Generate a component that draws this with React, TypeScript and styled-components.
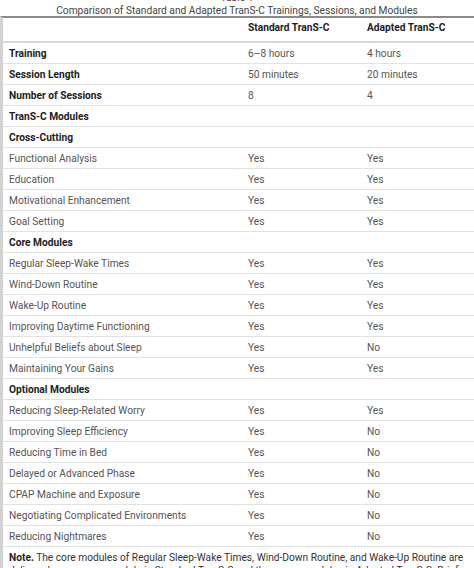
import React from 'react'
import styled, { createGlobalStyle } from 'styled-components'

type Row = { label: string; std?: string; adp?: string; strong?: boolean }

const rows: Row[] = [
  { label: 'Training', std: '6–8 hours', adp: '4 hours', strong: true },
  { label: 'Session Length', std: '50 minutes', adp: '20 minutes', strong: true },
  { label: 'Number of Sessions', std: '8', adp: '4', strong: true },
  { label: 'TranS-C Modules', strong: true },
  { label: 'Cross-Cutting', strong: true },
  { label: 'Functional Analysis', std: 'Yes', adp: 'Yes' },
  { label: 'Education', std: 'Yes', adp: 'Yes' },
  { label: 'Motivational Enhancement', std: 'Yes', adp: 'Yes' },
  { label: 'Goal Setting', std: 'Yes', adp: 'Yes' },
  { label: 'Core Modules', strong: true },
  { label: 'Regular Sleep-Wake Times', std: 'Yes', adp: 'Yes' },
  { label: 'Wind-Down Routine', std: 'Yes', adp: 'Yes' },
  { label: 'Wake-Up Routine', std: 'Yes', adp: 'Yes' },
  { label: 'Improving Daytime Functioning', std: 'Yes', adp: 'Yes' },
  { label: 'Unhelpful Beliefs about Sleep', std: 'Yes', adp: 'No' },
  { label: 'Maintaining Your Gains', std: 'Yes', adp: 'Yes' },
  { label: 'Optional Modules', strong: true },
  { label: 'Reducing Sleep-Related Worry', std: 'Yes', adp: 'Yes' },
  { label: 'Improving Sleep Efficiency', std: 'Yes', adp: 'No' },
  { label: 'Reducing Time in Bed', std: 'Yes', adp: 'No' },
  { label: 'Delayed or Advanced Phase', std: 'Yes', adp: 'No' },
  { label: 'CPAP Machine and Exposure', std: 'Yes', adp: 'No' },
  { label: 'Negotiating Complicated Environments', std: 'Yes', adp: 'No' },
  { label: 'Reducing Nightmares', std: 'Yes', adp: 'No' },
]

export default function App() {
  return (
    <>
      <GlobalStyle />
      <Page>
        <Caption>
          <TableLabel>Table 1</TableLabel>
          <Title>Comparison of Standard and Adapted TranS-C Trainings, Sessions, and Modules</Title>
        </Caption>
        <Body>
          <Table>
            <colgroup>
              <col style={{ width: 239 }} />
              <col style={{ width: 119 }} />
              <col />
            </colgroup>
            <thead>
              <tr>
                <HeadCell />
                <HeadCell>Standard TranS-C</HeadCell>
                <HeadCell>Adapted TranS-C</HeadCell>
              </tr>
            </thead>
            <tbody>
              {rows.map((r) => (
                <tr key={r.label}>
                  <Cell $strong={r.strong}>{r.label}</Cell>
                  <Cell>{r.std}</Cell>
                  <Cell>{r.adp}</Cell>
                </tr>
              ))}
            </tbody>
          </Table>
          <Note>
            <b>Note.</b> The core modules of Regular Sleep-Wake Times, Wind-Down Routine, and Wake-Up Routine are
            delivered as one core module in Standard TranS-C and three core modules in Adapted TranS-C. Brief
          </Note>
        </Body>
      </Page>
    </>
  )
}

const GlobalStyle = createGlobalStyle`
  html, body {
    margin: 0;
    padding: 0;
    background: #fff;
    overflow: hidden;
  }
  body {
    font-family: Roboto, "Liberation Sans", sans-serif;
  }
`

const Page = styled.div`
  width: 474px;
  height: 568px;
  overflow: hidden;
`

const Caption = styled.div`
  display: flow-root;
  height: 16px;
  overflow: hidden;
  text-align: center;
  color: #444;
  font-size: 10.2px;
  line-height: 12px;
`

const TableLabel = styled.div`
  margin-top: -8px;
  height: 12px;
`

const Title = styled.div`
  height: 12px;
  padding-top: 1px;
`

const Body = styled.div`
  border-left: 3px solid #d2d2d2;
  border-top: 2px solid #8a8a8a;
`

const Table = styled.table`
  width: 100%;
  border-collapse: collapse;
  table-layout: fixed;
  font-size: 10.2px;
`

const HeadCell = styled.th`
  height: 24px;
  padding: 2px 6px 0;
  text-align: left;
  vertical-align: top;
  line-height: 16px;
  font-weight: 700;
  color: #222;
  border-bottom: 2px solid #dadada;
  box-sizing: border-box;
`

const Cell = styled.td<{ $strong?: boolean }>`
  height: 21px;
  padding: 2px 6px 0;
  line-height: 18px;
  white-space: nowrap;
  color: ${(p) => (p.$strong ? '#222' : '#555')};
  font-weight: ${(p) => (p.$strong ? 700 : 400)};
  border-bottom: 1px solid #e2e2e2;
  box-sizing: border-box;
`

const Note = styled.div`
  padding: 4px 2px 0 6px;
  font-size: 10.2px;
  line-height: 13px;
  color: #333;

  b {
    color: #222;
  }
`
